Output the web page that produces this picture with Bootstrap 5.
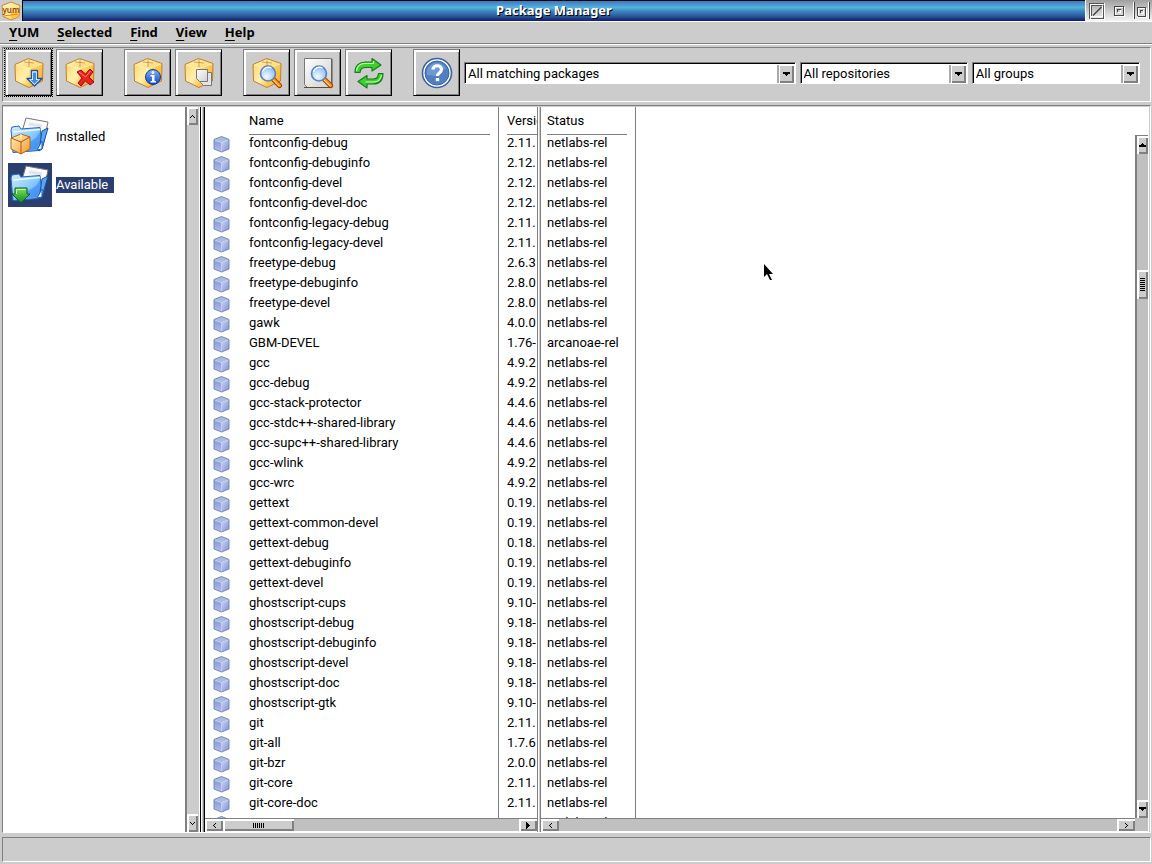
<!DOCTYPE html>
<html lang="en">
<head>
<meta charset="utf-8">
<meta name="viewport" content="width=device-width, initial-scale=1">
<title>Package Manager</title>
<link href="https://cdn.jsdelivr.net/npm/bootstrap@5.3.0/dist/css/bootstrap.min.css" rel="stylesheet">
<style>
  :root { --face:#ccc; --edge:#808080; --track:#c0c0c0; }
  body { font-family:Roboto, sans-serif; font-size:13px; line-height:16px; color:#000; background:var(--face); }
  button { color:#000; }
  .sunken { border:1px solid; border-color:var(--edge) #fff #fff var(--edge); }

  /* title bar */
  .titlebar { height:22px; border-bottom:1px solid #fff; }
  .title-icon { width:22px; background:var(--face); }
  .title-text { border-top:1px solid #000; border-left:1px solid #000; font:bold 13px/18px "Noto Sans", sans-serif; color:#fff; text-shadow:1px 1px 0 #000;
    background:linear-gradient(#4078c0, #4a9bd4 20%, #54b4dc 32%, #3f86c0 50%, #2b5a9c 75%, #101c6c); }
  .win-buttons { width:67px; background:linear-gradient(#a0a0a0, #f4f4f4); }

  /* menu */
  .menubar { height:22px; gap:18px; padding:0 9px; border-bottom:1px solid var(--edge); box-shadow:0 1px 0 #fff; font:bold 13px/20px "Noto Sans", sans-serif; }
  .menubar a { color:#000; text-decoration:none; }
  .menubar u { text-underline-offset:3px; text-decoration-thickness:1px; }

  /* tool bar */
  .toolbar { margin:3px 1px 0 2px; height:55px; padding:1px 10px 5px 2px; gap:4px; }
  .tool { width:47px; height:47px; background:var(--face); border:1px solid; border-color:var(--edge) #000 #000 var(--edge);
    box-shadow:inset 2px 2px 0 #fff, inset -1px -1px 0 var(--edge); }
  .tool:first-child { outline:1px dotted #000; }
  .tool svg { width:32px; height:32px; }
  .gap-before { margin-left:17px; }
  .combo { height:22px; border:1px solid; border-color:var(--edge) #fff #fff var(--edge); box-shadow:inset 1px 1px 0 #000; background:#fff; padding:2px 1px 0 2px; flex:1 1 0; min-width:0; }
  .combo-wide { flex-grow:2; }
  .combo select { appearance:none; border:0; padding:0 1px; background:#fff; color:#000; outline:0; font-size:13px; line-height:16px; min-width:0; }
  .combo-arrow { width:17px; height:18px; border-left:2px solid #aaa; background:var(--face); box-shadow:inset 1px 1px 0 #fff, inset -2px -2px 0 var(--edge); pointer-events:none; margin-left:-17px; }

  /* panes */
  .workarea { margin:3px 1px 0 2px; padding:1px 1px 0 0; min-height:0; }
  .tree { width:182px; padding:8px 5px; gap:4px; background:#fff; }
  .tree-row { height:44px; gap:4px; }
  .tree-row a { color:#000; text-decoration:none; }
  .tree-icon { width:44px; height:44px; }
  .chosen .tree-icon { background:#2a3f70; }
  .chosen a { background:#2a3f70; color:#fff; padding-right:6px; }
  .splitter { width:7px; border-right:1px solid #000; background:linear-gradient(90deg,#ccc 1px,#fff 1px 2px,#000 2px 3px,#fff 3px 4px,#ccc 4px 5px,#888 5px); }
  .pane { min-width:0; background:#fff; }
  .pane-names { width:333px; border-right:1px solid var(--edge); }
  .pane-gap { width:3px; background:linear-gradient(90deg,#fff 1px,#ccc 1px 2px,#808080 2px); }
  .clip { flex:1 1 0; min-height:0; overflow:hidden; }
  .grid { border-collapse:separate; border-spacing:0; table-layout:fixed; white-space:nowrap; }
  .grid th { height:28px; padding:6px 0 0; font-weight:400; vertical-align:top; }
  .grid th div { height:22px; border-bottom:1px solid var(--edge); overflow:hidden; }
  .grid td { height:20px; padding:0; vertical-align:top; overflow:hidden; }
  .grid td svg { display:block; width:17px; height:18px; margin-left:8px; }
  .col-icon { width:44px; }
  .col-pkg { width:250px; border-right:1px solid var(--edge); }
  .grid th.col-pkg { padding-right:8px; }
  .grid .col-ver { width:38px; padding-left:8px; }
  .grid .col-stat { width:95px; padding-left:6px; border-right:1px solid var(--edge); }
  .grid th.col-stat { padding-right:8px; }

  /* scroll bars */
  .vbar { width:13px; background:var(--track); border-left:2px solid var(--edge); }
  .hbar { height:14px; background:var(--track); border-top:1px solid var(--edge); border-bottom:1px solid #fff; }
  .knob { padding:0; border:0; background:var(--face); line-height:0; flex:none; display:flex; align-items:center; justify-content:center;
    box-shadow:inset 2px 2px 0 #fff, inset -2px -2px 0 var(--edge); }
  .vbar .knob { width:100%; height:18px; }
  .hbar .knob { width:18px; height:12px; }
  .vbar .thumb { height:29px; margin-top:116px; }
  .hbar .thumb { width:71px; }
  .grip-h { width:12px; height:5px; background:repeating-linear-gradient(90deg,#000 0 1px,#ccc 1px 2px); }
  .grip-v { width:5px; height:13px; background:repeating-linear-gradient(#000 0 1px,#ccc 1px 2px); }
  .side-bar { background:var(--face); }
  .corner { width:13px; height:14px; background:var(--track); border-bottom:1px solid #fff; }
  .right-edge { width:1px; background:#fff; }
  .right-vbar { margin-top:28px; border-top:1px solid var(--edge); }
  .statusbar { height:25px; margin:4px 1px 2px 2px; }
  .pointer { left:763px; top:263px; }
</style>
</head>
<body>
<svg width="0" height="0" class="position-absolute" aria-hidden="true">
  <defs>
    <linearGradient id="gTop" x1="0" y1="0" x2="1" y2="1"><stop offset="0" stop-color="#fff6c8"/><stop offset="1" stop-color="#ffd65e"/></linearGradient>
    <linearGradient id="gLeft" x1="0" y1="0" x2="1" y2="1"><stop offset="0" stop-color="#ffd970"/><stop offset=".6" stop-color="#fff0b0"/><stop offset="1" stop-color="#ffc23c"/></linearGradient>
    <linearGradient id="gRight" x1="0" y1="0" x2="1" y2="1"><stop offset="0" stop-color="#ffe080"/><stop offset="1" stop-color="#f9ab18"/></linearGradient>
    <linearGradient id="gBlue" x1="0" y1="0" x2="0" y2="1"><stop offset="0" stop-color="#7db4f8"/><stop offset="1" stop-color="#0c4ac4"/></linearGradient>
    <linearGradient id="gFold" x1="0" y1="0" x2="1" y2="1"><stop offset="0" stop-color="#d4ecff"/><stop offset=".5" stop-color="#8cccff"/><stop offset="1" stop-color="#3c8cf0"/></linearGradient>
    <linearGradient id="gPaper" x1="0" y1="0" x2="1" y2="1"><stop offset="0" stop-color="#fff"/><stop offset="1" stop-color="#cfcfcf"/></linearGradient>
    <linearGradient id="gGreen" x1="0" y1="0" x2="0" y2="1"><stop offset="0" stop-color="#7ee05c"/><stop offset="1" stop-color="#0c8a1c"/></linearGradient>
    <linearGradient id="gOrange" x1="0" y1="0" x2="1" y2="1"><stop offset="0" stop-color="#fff4c0"/><stop offset="1" stop-color="#f8962c"/></linearGradient>
    <radialGradient id="gLens" cx=".4" cy=".7" r=".7"><stop offset="0" stop-color="#f4fcff"/><stop offset="1" stop-color="#86bcf4"/></radialGradient>
    <linearGradient id="gCubeL" x1="0" y1="0" x2="0" y2="1"><stop offset="0" stop-color="#8499d0"/><stop offset="1" stop-color="#b4baf4"/></linearGradient>
    <linearGradient id="gCubeR" x1="0" y1="0" x2="1" y2="1"><stop offset="0" stop-color="#d0d6fa"/><stop offset="1" stop-color="#7c8cd0"/></linearGradient>
  </defs>
  <symbol id="box" viewBox="0 0 32 32">
    <path d="M2 7.500 15.500 1.500 30 6.500 16 11z" fill="url(#gTop)"/>
    <path d="M2 7.500 16 11v19.500L2.500 24z" fill="url(#gLeft)"/><path d="M16 11 30 6.500 29.500 24 16 30.500z" fill="url(#gRight)"/>
    <path d="M2 7.500 15.500 1.500 30 6.500 29.500 24 16 30.500 2.500 24z" fill="none" stroke="#c08030" stroke-linejoin="round"/>
    <path d="M3 8l13 3.500 13-4.500M16 12v6" fill="none" stroke="#fff4b8" stroke-width=".8"/>
    <path d="M16 2v8M11 5l10 1" fill="none" stroke="#c88c40" stroke-width=".8"/>
  </symbol>
  <symbol id="lens" viewBox="0 0 32 32">
    <path d="M22 22l6.500 6.500" stroke="#a04000" stroke-width="5" stroke-linecap="round"/><path d="M22 22l6.500 6.500" stroke="#ff9a24" stroke-width="3" stroke-linecap="round"/><path d="M22 23l6 6" stroke="#ffe488"/>
    <circle cx="17" cy="16.500" r="7.500" fill="url(#gLens)" stroke="#5b7fb8" stroke-width="1.600"/><path d="M11.500 15a6 6 0 0 1 9-4" fill="none" stroke="#fff" stroke-width="1.200"/>
  </symbol>
  <symbol id="folder" viewBox="0 0 44 44">
    <path d="M18 3l22 4-5 24-24-4z" fill="#fafafc" stroke="#777"/><path d="M21 9l13 2" stroke="#e4e4e8" stroke-width="3"/>
    <path d="M3 15l1-3 7-1 2 3 19-1.500 2 20-3 3-26 2z" fill="url(#gFold)" stroke="#2468b8"/>
    <path d="M34 16l6-3-6 21-3 2z" fill="#5ba6f8" stroke="#1a50a0"/><path d="M5 17l27-2.500" stroke="#e8f8ff" stroke-width="1.500"/>
    <path d="M14 29q13-2 18-12v10l-4 7-14 1z" fill="#2f7fe8" opacity=".5"/><path d="M29 35l5-9v8z" fill="#e8f6ff" stroke="#1c60c0"/>
  </symbol>
  <symbol id="cube" viewBox="0 0 17 18">
    <path d="M1 4.500 8.500 1.500 16 4.500 8.500 7.500z" fill="#a9bce0"/><path d="M1 4.500 8.500 7.500v9.500L1 14z" fill="url(#gCubeL)"/><path d="M8.500 7.500 16 4.500V14l-7.500 3z" fill="url(#gCubeR)"/>
    <path d="M1 4.500 8.500 1.500 16 4.500V14l-7.500 3L1 14z" fill="none" stroke="#788cac"/><path d="M2 5.500 8.500 7.500 15 5.500" fill="none" stroke="#c8d4f0" stroke-width=".8"/>
  </symbol>
  <symbol id="up" viewBox="0 0 7 4"><path d="M3 0h1v1h1v1h2v2H0V2h2V1h1z"/></symbol>
  <symbol id="chev" viewBox="0 0 5 3"><path d="M0 2h1v1H0zM1 1h1v1H1zM2 0h1v1H2zM3 1h1v1H3zM4 2h1v1H4z"/></symbol>
  <symbol id="tri" viewBox="0 0 7 4"><path d="M0 0h7v2H5v1H4v1H3V3H2V2H0z"/></symbol>
</svg>

<div class="d-flex flex-column vh-100 overflow-hidden">
  <header class="titlebar d-flex flex-shrink-0">
    <div class="title-icon">
      <svg width="22" height="21" viewBox="0 0 22 21" class="d-block" role="img" aria-label="yum"><path d="M2 5.500 11 2l9 3.500-1 11-8 3.500-8-3.500z" fill="url(#gTop)" stroke="#c88a34"/><path d="M11 12l8-2-1 6-7 3z" fill="#ffc840"/><text x="11" y="13" text-anchor="middle" font-family="Noto Sans" font-weight="600" font-size="8" fill="#8c4818">yum</text><path d="M4 16l14-2" stroke="#e88820"/></svg>
    </div>
    <h1 class="title-text flex-grow-1 text-center m-0">Package Manager</h1>
    <div class="win-buttons">
      <svg class="d-block" width="67" height="21" viewBox="0 0 67 21" fill="none" stroke-width="1" shape-rendering="crispEdges">
        <path d="M.500 0v21" stroke="#fff"/>
        <path d="M4.500 19V3.500H19M6.500 16V5.500H17M18.500 5v13.500H6" stroke="#555"/><path d="M5.500 18V4.500H18M6 16.500h11.500V6M19.500 3v16.500H5" stroke="#fff"/><path d="M8 15.500 16.500 7" stroke="#444" stroke-width="1.500" shape-rendering="auto"/>
        <path d="M29.500 16V6.500H39M38.500 7v8.500H30M32.500 12V9.500h3" stroke="#444"/><path d="M30.500 15V7.500H38M33 12.500H35.500V10M39.500 7v9.500H30" stroke="#fff"/>
        <path d="M49.500 2v17M64.500 2v17M52.500 16V7.500H61M60.500 8v8.500H53M55.500 13V10.500h2" stroke="#444"/><path d="M48.500 2v17M63.500 2v17M53.500 15V8.500H60M56 13.500H58.500V10M61.500 8v9.500H53" stroke="#fff"/>
      </svg>
    </div>
  </header>

  <nav class="menubar d-flex flex-shrink-0" aria-label="Main menu">
    <a href="#"><u>Y</u>UM</a><a href="#"><u>S</u>elected</a><a href="#"><u>F</u>ind</a><a href="#"><u>V</u>iew</a><a href="#"><u>H</u>elp</a>
  </nav>

  <div class="toolbar sunken d-flex align-items-center flex-shrink-0" role="toolbar" aria-label="Tools">
    <button class="tool p-0 flex-shrink-0" type="button" aria-label="Install"><svg viewBox="0 0 32 32"><use href="#box"/><path d="M18.500 13.500h6v8h4.500l-7.500 7.500-7.500-7.500h4.500z" fill="#fff" stroke="#2050a0" stroke-width="1.400" stroke-linejoin="round"/><path d="M20 15.500h3v7.500h2.500l-4 4-4-4H20z" fill="#3c8ce8"/></svg></button>
    <button class="tool p-0 flex-shrink-0" type="button" aria-label="Remove"><svg viewBox="0 0 32 32"><use href="#box"/><path d="M13 15l4-2 4.500 4 4.500-5 3 3-4 5 5 5-4 3-4.500-4-4.500 5-3-3 4-5z" fill="#ee2020" stroke="#a00808" stroke-linejoin="round"/><path d="M15 15l6.500 5 5-6" fill="none" stroke="#ff8888"/></svg></button>
    <button class="tool gap-before p-0 flex-shrink-0" type="button" aria-label="Information"><svg viewBox="0 0 32 32"><use href="#box"/><circle cx="21" cy="20" r="7.500" fill="url(#gBlue)" stroke="#123a9c"/><circle cx="21" cy="15.500" r="1.500" fill="#fff"/><path d="M18.500 18h4v6H24v1.500h-5.500V24H20v-4.500h-1.500z" fill="#fff"/></svg></button>
    <button class="tool p-0 flex-shrink-0" type="button" aria-label="Copy"><svg viewBox="0 0 32 32"><use href="#box"/><path d="M17.500 15.500h11v13h-8l-3-3z" fill="#e4e4e4" stroke="#777"/><path d="M13.500 12.500h11v12h-8l-3-3z" fill="url(#gPaper)" stroke="#777"/></svg></button>
    <button class="tool gap-before p-0 flex-shrink-0" type="button" aria-label="Find package"><svg viewBox="0 0 32 32"><use href="#box"/><use href="#lens"/></svg></button>
    <button class="tool p-0 flex-shrink-0" type="button" aria-label="Find file"><svg viewBox="0 0 32 32"><path d="M2.500 1.500h27v29h-24l-3-3z" fill="url(#gPaper)" stroke="#777"/><path d="M2 30.500h28V2" stroke="#5b4a3c" fill="none"/><use href="#lens"/></svg></button>
    <button class="tool p-0 flex-shrink-0" type="button" aria-label="Refresh"><svg viewBox="0 0 32 32" stroke="#187a24" stroke-width="1.200" stroke-linejoin="round"><path d="M2 15.500C2 8 7 5 12 5h7V1.500L28 8l-9 6v-3.500h-6c-4 0-5.500 1-6 5z" fill="#3ed028"/><path d="M30 16.500c0 8-5 10.500-10 10.500h-6v4L5 24.500l9-6V22h6c4 0 5-1.500 5.500-5.500z" fill="#3ed028"/><path d="M3.500 14c.5-5 4-7.500 8.500-7.500h8.500V4M28.500 18c-1 5-4 7-8 7h-8" fill="none" stroke="#c4ffb0" stroke-width="1.200"/></svg></button>
    <button class="tool gap-before p-0 flex-shrink-0" type="button" aria-label="Help"><svg viewBox="0 0 32 32"><circle cx="16" cy="16" r="14.500" fill="#fff" stroke="#3a64a4" stroke-width="1.600"/><circle cx="16" cy="16" r="12" fill="#527fc0" stroke="#3b68a8"/><path d="M6 18a10 10 0 0 1 19-6q-8 1-10 7z" fill="#7ca4d8" opacity=".7"/><path d="M12 12.500c0-5 8.500-5 8.500 0 0 3.500-4 3-4 6.500" fill="none" stroke="#fff" stroke-width="3.200"/><rect x="14.800" y="21" width="3.400" height="3.200" fill="#fff"/></svg></button>
    <div class="combo combo-wide d-flex"><select class="w-100" aria-label="Package filter"><option>All matching packages</option></select><span class="combo-arrow d-flex flex-shrink-0 align-items-center justify-content-center"><svg width="7" height="4"><use href="#tri"/></svg></span></div>
    <div class="combo d-flex"><select class="w-100" aria-label="Repository"><option>All repositories</option></select><span class="combo-arrow d-flex flex-shrink-0 align-items-center justify-content-center"><svg width="7" height="4"><use href="#tri"/></svg></span></div>
    <div class="combo d-flex"><select class="w-100" aria-label="Group"><option>All groups</option></select><span class="combo-arrow d-flex flex-shrink-0 align-items-center justify-content-center"><svg width="7" height="4"><use href="#tri"/></svg></span></div>
  </div>

  <main class="workarea sunken d-flex flex-grow-1">
    <nav class="tree d-flex flex-column flex-shrink-0" aria-label="Package sets">
      <div class="tree-row d-flex align-items-center">
        <svg class="tree-icon flex-shrink-0" viewBox="0 0 44 44"><use href="#folder"/><path d="M3 23l10-4 9 3v12l-9 5-10-5z" fill="url(#gOrange)" stroke="#b06818"/><path d="M3 23l10 4 9-5M13 27v12" fill="none" stroke="#a8581c"/><path d="M13 19v5" stroke="#fff"/></svg><a href="#">Installed</a>
      </div>
      <div class="tree-row chosen d-flex align-items-center">
        <svg class="tree-icon flex-shrink-0" viewBox="0 0 44 44"><use href="#folder"/><path d="M7 25h12v6h3l-9 9-9-9h3z" fill="url(#gGreen)" stroke="#08601c"/><path d="M8.500 31v-4.500h9" fill="none" stroke="#c4ffb0"/></svg><a href="#">Available</a>
      </div>
    </nav>
    <div class="vbar side-bar d-flex flex-column justify-content-between flex-shrink-0">
      <button class="knob" type="button" aria-label="Scroll up"><svg width="5" height="3"><use href="#chev"/></svg></button>
      <button class="knob" type="button" aria-label="Scroll down"><svg width="5" height="3" viewBox="0 0 5 3"><path d="M0 0h1v1H0zM1 1h1v1H1zM2 2h1v1H2zM3 1h1v1H3zM4 0h1v1H4z"/></svg></button>
    </div>
    <div class="splitter flex-shrink-0"></div>

    <section class="pane pane-names d-flex flex-column flex-shrink-0">
      <div class="clip">
        <table class="grid w-100">
          <thead><tr><th class="col-icon" aria-label="Icon"></th><th class="col-pkg"><div>Name</div></th><th class="col-ver"><div>Version</div></th></tr></thead>
          <tbody id="names"></tbody>
        </table>
      </div>
      <div class="hbar d-flex flex-shrink-0">
        <button class="knob" type="button" aria-label="Scroll left"><svg width="3" height="5" viewBox="0 0 3 5"><path d="M2 0h1v1H2zM1 1h1v1H1zM0 2h1v1H0zM1 3h1v1H1zM2 4h1v1H2z"/></svg></button>
        <button class="knob thumb" type="button" aria-label="Scroll position"><span class="grip-h"></span></button>
        <button class="knob ms-auto" type="button" aria-label="Scroll right"><svg width="4" height="7" viewBox="0 0 4 7"><path d="M0 0h1v1h1v1h1v1h1v1H3v1H2v1H1v1H0z"/></svg></button>
      </div>
    </section>
    <div class="pane-gap flex-shrink-0"></div>
    <section class="pane d-flex flex-column flex-grow-1">
      <div class="clip">
        <table class="grid">
          <thead><tr><th class="col-stat"><div>Status</div></th></tr></thead>
          <tbody id="statuses"></tbody>
        </table>
      </div>
      <div class="hbar d-flex justify-content-between flex-shrink-0">
        <button class="knob" type="button" aria-label="Scroll left"><svg width="3" height="5" viewBox="0 0 3 5"><path d="M2 0h1v1H2zM1 1h1v1H1zM0 2h1v1H0zM1 3h1v1H1zM2 4h1v1H2z"/></svg></button>
        <button class="knob" type="button" aria-label="Scroll right"><svg width="3" height="5" viewBox="0 0 3 5"><path d="M0 0h1v1H0zM1 1h1v1H1zM2 2h1v1H2zM1 3h1v1H1zM0 4h1v1H0z"/></svg></button>
      </div>
    </section>
    <div class="pane d-flex flex-column flex-shrink-0">
      <div class="vbar right-vbar d-flex flex-column flex-grow-1">
        <button class="knob" type="button" aria-label="Scroll up"><svg width="7" height="4"><use href="#up"/></svg></button>
        <button class="knob thumb" type="button" aria-label="Scroll position"><span class="grip-v"></span></button>
        <button class="knob mt-auto" type="button" aria-label="Scroll down"><svg width="7" height="4"><use href="#tri"/></svg></button>
      </div>
      <div class="corner"></div>
    </div>
    <div class="right-edge flex-shrink-0"></div>
  </main>

  <footer class="statusbar sunken flex-shrink-0"></footer>
</div>

<svg class="pointer position-absolute" width="12" height="18" viewBox="0 0 12 18" aria-hidden="true"><path d="M1 1v13l3-3 3 6h2l-3-6h4z"/></svg>

<script>
  const packages = [
    ["fontconfig-debug","2.11."],["fontconfig-debuginfo","2.12."],["fontconfig-devel","2.12."],["fontconfig-devel-doc","2.12."],
    ["fontconfig-legacy-debug","2.11."],["fontconfig-legacy-devel","2.11."],["freetype-debug","2.6.3"],["freetype-debuginfo","2.8.0"],
    ["freetype-devel","2.8.0"],["gawk","4.0.0"],["GBM-DEVEL","1.76-","arcanoae-rel"],["gcc","4.9.2"],["gcc-debug","4.9.2"],
    ["gcc-stack-protector","4.4.6"],["gcc-stdc++-shared-library","4.4.6"],["gcc-supc++-shared-library","4.4.6"],["gcc-wlink","4.9.2"],
    ["gcc-wrc","4.9.2"],["gettext","0.19."],["gettext-common-devel","0.19."],["gettext-debug","0.18."],["gettext-debuginfo","0.19."],
    ["gettext-devel","0.19."],["ghostscript-cups","9.10-"],["ghostscript-debug","9.18-"],["ghostscript-debuginfo","9.18-"],
    ["ghostscript-devel","9.18-"],["ghostscript-doc","9.18-"],["ghostscript-gtk","9.10-"],["git","2.11."],["git-all","1.7.6"],
    ["git-bzr","2.0.0"],["git-core","2.11."],["git-core-doc","2.11."],["git-cvs","2.11."]
  ];
  document.getElementById("names").innerHTML = packages.map(([name, version]) =>
    `<tr><td class="col-icon"><svg><use href="#cube"/></svg></td><td class="col-pkg">${name}</td><td class="col-ver">${version}</td></tr>`).join("");
  document.getElementById("statuses").innerHTML = packages.map(([, , repo = "netlabs-rel"]) =>
    `<tr><td class="col-stat">${repo}</td></tr>`).join("");
</script>
<script src="https://cdn.jsdelivr.net/npm/bootstrap@5.3.0/dist/js/bootstrap.bundle.min.js"></script>
</body>
</html>
